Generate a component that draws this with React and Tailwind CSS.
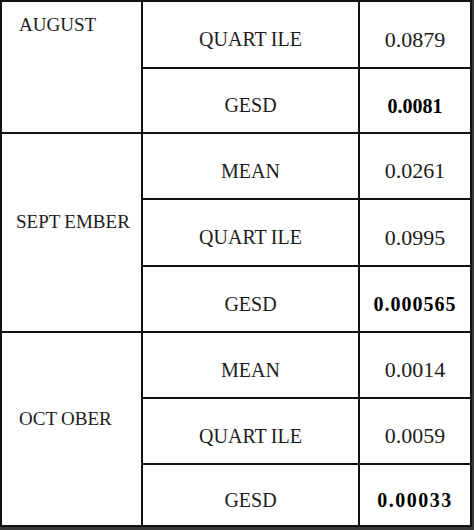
const serif = { fontFamily: '"Liberation Serif", "Times New Roman", serif' };

// T is followed by a small gap in the source rendering
function Gap({ head, tail }) {
  return (
    <>
      <span className="mr-[4px]">{head}</span>
      {tail}
    </>
  );
}

const months = [
  { name: 'AUGUST', span: 'row-start-1 row-span-2', pad: 'pt-[13px] pl-[17px]' },
  { name: <Gap head="SEPT" tail="EMBER" />, span: 'row-start-3 row-span-3', pad: 'pt-[78px] pl-[14px]' },
  { name: <Gap head="OCT" tail="OBER" />, span: 'row-start-6 row-span-3', pad: 'pt-[76px] pl-[17px]' },
];

const rows = [
  { method: <Gap head="QUART" tail="ILE" />, value: '0.0879' },
  { method: 'GESD', value: '0.0081', bold: true, track: 'tracking-[0px]' },
  { method: 'MEAN', value: '0.0261' },
  { method: <Gap head="QUART" tail="ILE" />, value: '0.0995' },
  { method: 'GESD', value: '0.000565', bold: true, track: 'tracking-[1px]' },
  { method: 'MEAN', value: '0.0014' },
  { method: <Gap head="QUART" tail="ILE" />, value: '0.0059' },
  { method: 'GESD', value: '0.00033', bold: true, track: 'tracking-[1.5px]' },
];

const rowStarts = [
  'row-start-1',
  'row-start-2',
  'row-start-3',
  'row-start-4',
  'row-start-5',
  'row-start-6',
  'row-start-7',
  'row-start-8',
];

export default function App() {
  return (
    <div className="w-[474px] h-[530px] bg-[#3a3a3a] text-[#1c1c1c]" style={serif}>
      <div className="grid w-[472px] grid-cols-[139px_215px_110px] grid-rows-[65px_63px_64px_65px_64px_64px_64px_60px] gap-[2px] p-[2px] bg-[#111]">
        {months.map((m, i) => (
          <div key={i} className={'col-start-1 bg-white text-[19px] leading-none ' + m.span + ' ' + m.pad}>
            {m.name}
          </div>
        ))}
        {rows.map((r, i) => (
          <div key={'m' + i} className={'col-start-2 bg-white flex items-center justify-center pt-[9px] text-[20px] leading-none ' + rowStarts[i]}>
            {r.method}
          </div>
        ))}
        {rows.map((r, i) => (
          <div
            key={'v' + i}
            className={
              'col-start-3 bg-white flex items-center justify-center pt-[10px] leading-none ' +
              rowStarts[i] +
              (r.bold ? ' text-[20px] font-bold text-black ' + r.track : ' text-[22px]')
            }
          >
            {r.value}
          </div>
        ))}
      </div>
    </div>
  );
}
